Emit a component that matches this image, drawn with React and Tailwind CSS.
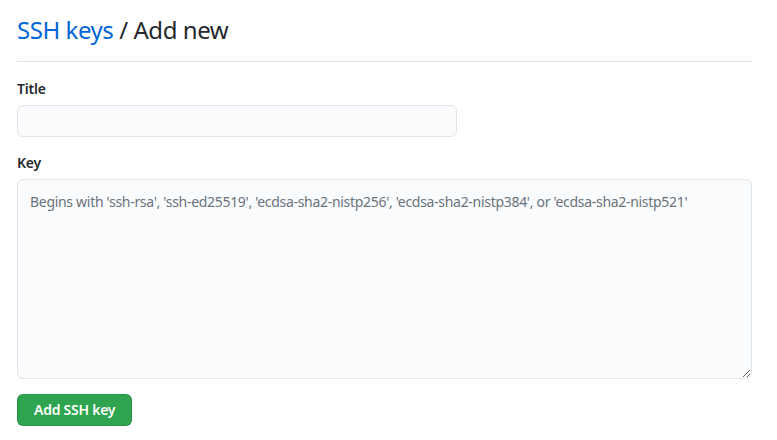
import React from "react";

export default function App() {
  return (
    <div className="w-[777px] h-[440px] bg-white pl-[17px] pr-[25px] pt-[14px]" style={{ fontFamily: '"Segoe UI", "Noto Sans", sans-serif' }}>
      <div className="border-b border-[#e1e4e8] pb-[15px]">
        <h1 className="text-[24px] leading-[32px] font-normal text-[#24292e] tracking-[-0.45px]">
          <a className="text-[#0366d6]">SSH keys</a> / Add new
        </h1>
      </div>
      <div className="mt-[17px]">
        <label className="block text-[14px] font-semibold text-[#24292e] leading-[20px] mb-[6px] tracking-[-0.2px]">Title</label>
        <input className="block w-[440px] h-[32px] rounded-[6px] border border-[#e1e4e8] bg-[#fafbfc] px-[12px] text-[14px] outline-none" />
      </div>
      <div className="mt-[16px]">
        <label className="block text-[14px] font-semibold text-[#24292e] leading-[20px] mb-[6px] tracking-[-0.2px]">Key</label>
        <textarea
          className="block w-full h-[200px] rounded-[6px] border border-[#e1e4e8] bg-[#fafbfc] px-[12px] pt-[12px] pb-[10px] text-[14px] leading-[20px] tracking-[-0.3px] text-[#24292e] placeholder:text-[#6a737d] outline-none resize-y"
          placeholder="Begins with 'ssh-rsa', 'ssh-ed25519', 'ecdsa-sha2-nistp256', 'ecdsa-sha2-nistp384', or 'ecdsa-sha2-nistp521'"
        />
      </div>
      <button className="mt-[15px] h-[32px] px-[16px] rounded-[6px] bg-[#2ea44f] border border-[rgba(27,31,35,0.15)] text-white text-[14px] font-semibold leading-[20px] tracking-[-0.25px]">
        Add SSH key
      </button>
    </div>
  );
}
